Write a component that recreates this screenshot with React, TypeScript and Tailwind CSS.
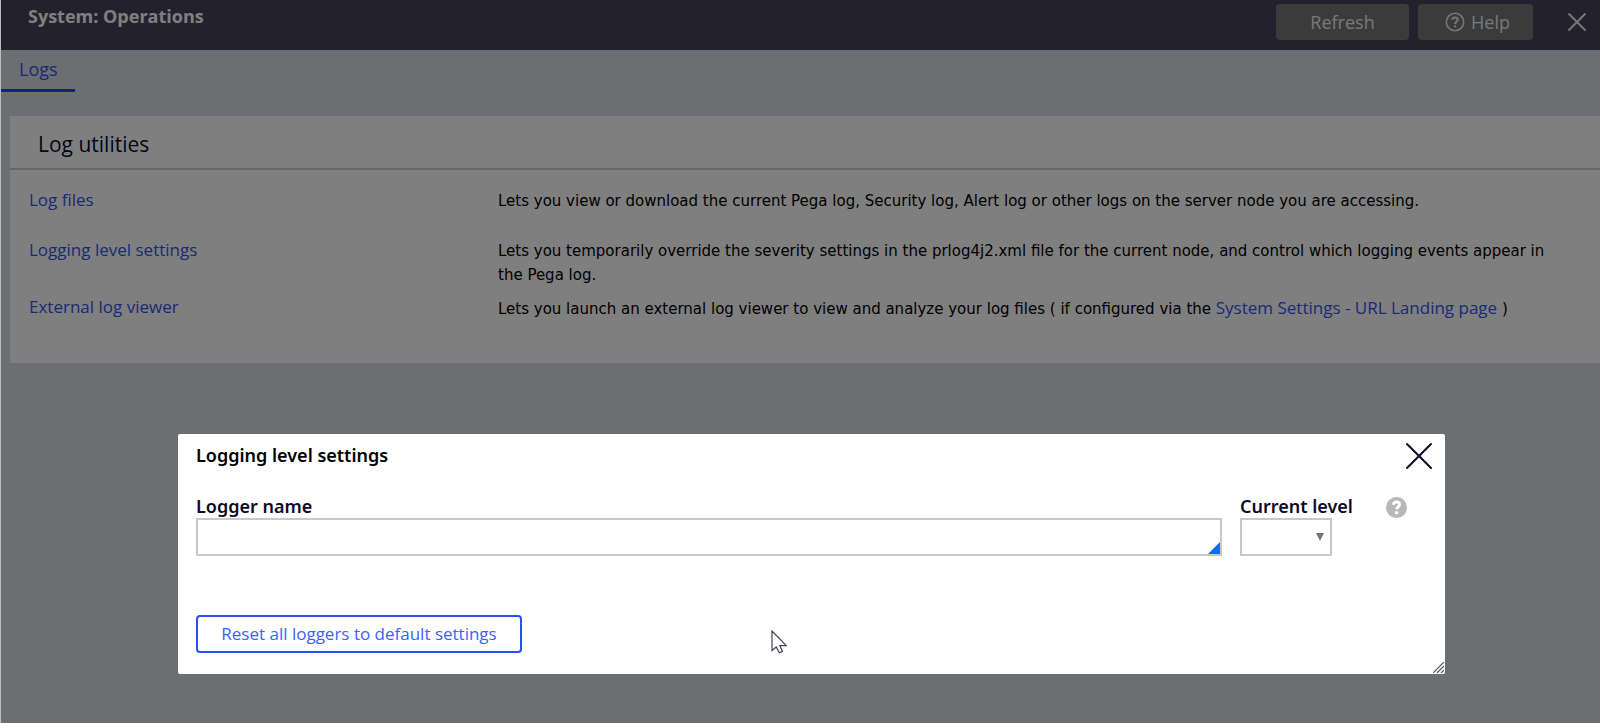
import { X } from "lucide-react";

const utilities = [
  {
    name: "Log files",
    description:
      "Lets you view or download the current Pega log, Security log, Alert log or other logs on the server node you are accessing.",
    row: "h-[50px]",
  },
  {
    name: "Logging level settings",
    description:
      "Lets you temporarily override the severity settings in the prlog4j2.xml file for the current node, and control which logging events appear in the Pega log.",
    row: "h-[57px]",
  },
  {
    name: "External log viewer",
    description: "Lets you launch an external log viewer to view and analyze your log files ( if configured via the ",
    link: "System Settings - URL Landing page",
    row: "h-12",
  },
];

const Header = () => (
  <header className="flex h-[50px] items-start justify-between bg-[#44435a] pl-[27px] pr-[11px]">
    <h1 className="text-lg leading-8 font-bold text-white">System: Operations</h1>
    <div className="flex items-center pt-1">
      <button className="h-9 w-[133px] rounded bg-[#777777] text-lg text-[#eeeeee]">Refresh</button>
      <button className="ml-[9px] flex h-9 w-[115px] items-center justify-center gap-1.5 rounded bg-[#777777] pl-1 text-lg text-[#eeeeee]">
        <svg className="size-5" viewBox="0 0 20 20" fill="none" stroke="currentColor" strokeWidth="1.6">
          <circle cx="10" cy="10" r="8.7" />
          <path d="M7.3 7.8C7.4 6.2 8.5 5.4 10 5.4c1.6 0 2.7.9 2.7 2.3 0 2-2.6 2.1-2.6 4.2" strokeWidth="2" />
          <path d="M10.1 13.3v2" strokeWidth="2" />
        </svg>
        Help
      </button>
      <button aria-label="Close" className="ml-8 text-[#eeeeee]">
        <svg className="size-6" viewBox="0 0 24 24" fill="none" stroke="currentColor" strokeWidth="2">
          <path d="M3.5 3.5l17 17M20.5 3.5l-17 17" />
        </svg>
      </button>
    </div>
  </header>
);

const LogUtilities = () => (
  <section className="mt-6 ml-[9px] bg-white pb-5">
    <h2 className="border-b-2 border-[#cccdd2] pt-3 pb-2 pl-7 text-[21px] leading-8 font-medium text-[#0a0a28]">
      Log utilities
    </h2>
    <div className="pt-[18px] pr-10 pl-[19px]">
      {utilities.map((item) => (
        <div key={item.name} className={`flex ${item.row}`}>
          <div className="w-[469px] shrink-0 text-[17px] leading-6">
            <a href="#" className="text-[#3355ee]">{item.name}</a>
          </div>
          <p className="pt-px font-['DejaVu_Sans',sans-serif] text-[15px] leading-6 text-black">
            {item.description}
            {item.link && (
              <>
                <a href="#" className="font-['Open_Sans',sans-serif] text-[17px] text-[#3355ee]">{item.link}</a>
                {" )"}
              </>
            )}
          </p>
        </div>
      ))}
    </div>
  </section>
);

const LoggingDialog = () => (
  <div
    role="dialog"
    aria-labelledby="dialog-title"
    className="relative flex-1 rounded-xs bg-white px-[18px] pt-1.5 pb-[21px]"
  >
    <div className="flex h-[54px] items-start justify-between">
      <h2 id="dialog-title" className="font-['Noto_Sans',sans-serif] text-lg leading-[30px] font-semibold text-black">
        Logging level settings
      </h2>
      <button aria-label="Close dialog" className="-mr-2 text-[#0a0a28]">
        <X className="size-8 scale-150" strokeWidth={1} />
      </button>
    </div>
    <div className="flex items-start">
      <div className="flex-1">
        <label htmlFor="logger" className="block font-['Noto_Sans',sans-serif] text-lg leading-6 font-semibold text-[#0a0a28]">
          Logger name
        </label>
        <div className="relative">
          <input id="logger" type="text" className="block h-[38px] w-full border-2 border-[#c8c8c8] px-2" />
          <svg className="absolute right-0.5 bottom-0.5 size-3" viewBox="0 0 12 12" fill="#0070ff">
            <path d="M12 0v12H0z" />
          </svg>
        </div>
      </div>
      <div className="ml-[18px] w-[146px]">
        <label htmlFor="level" className="block font-['Noto_Sans',sans-serif] text-lg leading-6 font-semibold text-[#0a0a28]">
          Current level
        </label>
        <div className="relative w-[92px]">
          <select id="level" className="block h-[38px] w-full appearance-none border-2 border-[#c8c8c8] px-2" />
          <svg className="pointer-events-none absolute top-[15px] right-2 size-2" viewBox="0 0 8 8" fill="#777777">
            <path d="M0 0h8L4 8z" />
          </svg>
        </div>
      </div>
      <button aria-label="Help" className="mt-[3px] mr-5">
        <svg className="size-[21px]" viewBox="0 0 21 21" fill="none">
          <circle cx="10.5" cy="10.5" r="10.5" fill="#b8b8b8" />
          <path d="M7.3 7.8C7.6 5.9 8.8 5 10.5 5c1.9 0 3.1 1 3.1 2.6 0 2.3-2.9 2.3-2.9 4.7" stroke="white" strokeWidth="2.8" />
          <circle cx="10.6" cy="15.7" r="1.8" fill="white" />
        </svg>
      </button>
    </div>
    <button className="mt-[59px] h-[38px] w-[326px] rounded border-2 border-[#2a4fff] text-[17px] text-[#3d5fff]">
      Reset all loggers to default settings
    </button>
    <svg className="absolute right-px bottom-px size-[11px]" viewBox="0 0 11 11" stroke="#555555" strokeWidth="1.2">
      <path d="M0 11L11 0M4 11l7-7M8 11l3-3" />
    </svg>
    <svg className="absolute bottom-5 left-[593px] h-6 w-4" viewBox="0 0 16 24" fill="white" stroke="#44434f" strokeWidth="1.2">
      <path d="M1 1v19.5L5.3 17l3 5.8 3.2-1.4-2.6-5.7H15.3z" />
    </svg>
  </div>
);

export default function App() {
  return (
    <div className="min-h-screen bg-[#b9bcb9] pl-px font-['Open_Sans',sans-serif]">
      <div className="min-h-screen bg-[#dadce2]">
        <Header />
        <nav className="flex h-[42px]">
          <a href="#" className="w-[74px] border-b-[3px] border-[#2546f5] pl-[18px] text-lg leading-[38px] text-[#3355ee]">
            Logs
          </a>
        </nav>
        <LogUtilities />
      </div>
      <div className="fixed inset-y-0 right-0 left-px flex items-start bg-black/50 pt-[434px] pr-[155px] pl-[177px]">
        <LoggingDialog />
      </div>
    </div>
  );
}
